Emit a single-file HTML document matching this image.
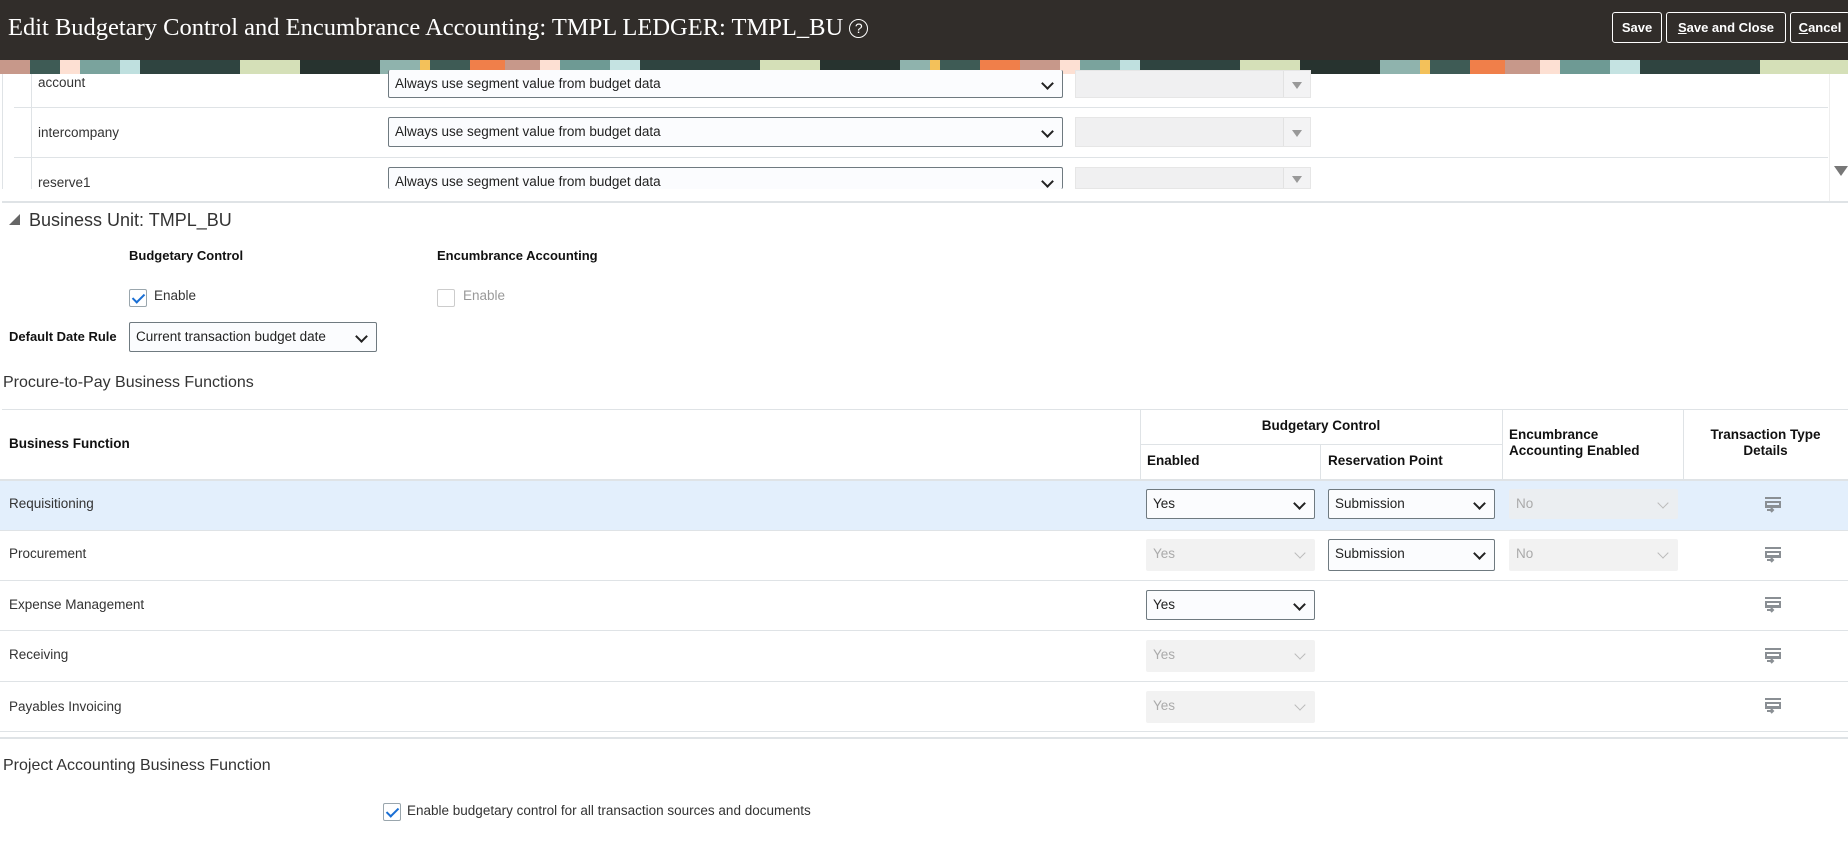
<!DOCTYPE html>
<html><head><meta charset="utf-8"><style>
*{box-sizing:border-box;margin:0;padding:0}
body{width:1848px;height:853px;overflow:hidden;background:#fff;font-family:"Liberation Sans",sans-serif;font-size:13.5px;color:#333;position:relative}
.a{position:absolute}
.hdr{left:0;top:0;width:1848px;height:60px;background:#312d2a}
.ttl{left:8px;top:14px;font-family:"Liberation Serif",serif;font-size:24.5px;color:#fff;white-space:nowrap}
.btn{top:12px;height:31px;border:1px solid #fff;border-radius:3px;color:#fff;font-weight:bold;font-size:13px;line-height:29px;text-align:center}
.ban{left:0;top:60px;width:1848px;height:14px;background:linear-gradient(90deg,#c7988a 0,#c7988a 30px,#3e5b55 30px,#3e5b55 60px,#fde0d3 60px,#fde0d3 80px,#7aa39d 80px,#7aa39d 120px,#bfe0df 120px,#bfe0df 140px,#2f4440 140px,#2f4440 240px,#d5e0b8 240px,#d5e0b8 300px,#27332f 300px,#27332f 380px,#8fb3ad 380px,#8fb3ad 420px,#f3c15a 420px,#f3c15a 430px,#3e5b55 430px,#3e5b55 470px,#f07f4a 470px,#f07f4a 505px,#c7988a 505px,#c7988a 540px,#fde0d3 540px,#fde0d3 560px,#6e9a94 560px,#6e9a94 610px,#c5e3e2 610px,#c5e3e2 640px,#2f4440 640px,#2f4440 760px,#d5e0b8 760px,#d5e0b8 820px,#27332f 820px,#27332f 900px,#8fb3ad 900px,#8fb3ad 930px,#f3c15a 930px,#f3c15a 940px,#3e5b55 940px,#3e5b55 980px,#f07f4a 980px,#f07f4a 1020px,#c7988a 1020px,#c7988a 1060px,#fde0d3 1060px,#fde0d3 1080px,#7aa39d 1080px,#7aa39d 1120px,#bfe0df 1120px,#bfe0df 1140px,#2f4440 1140px,#2f4440 1240px,#d5e0b8 1240px,#d5e0b8 1300px,#27332f 1300px,#27332f 1380px,#8fb3ad 1380px,#8fb3ad 1420px,#f3c15a 1420px,#f3c15a 1430px,#3e5b55 1430px,#3e5b55 1470px,#f07f4a 1470px,#f07f4a 1505px,#c7988a 1505px,#c7988a 1540px,#fde0d3 1540px,#fde0d3 1560px,#6e9a94 1560px,#6e9a94 1610px,#c5e3e2 1610px,#c5e3e2 1640px,#2f4440 1640px,#2f4440 1760px,#d5e0b8 1760px,#d5e0b8 1848px)}
.sel{border:1px solid #6f7a80;border-radius:2px;background:#fbfcfe;height:30px;line-height:28px;padding-left:6px;font-size:13.5px;color:#222;white-space:nowrap}
.sel::after{content:"";position:absolute;right:10px;top:9px;width:7px;height:7px;border-right:2px solid #222;border-bottom:2px solid #222;transform:rotate(45deg)}
.dis{border-color:#f2f2f2;background:#f2f2f2;color:#aaa}
.dis::after{border-color:#bbb;border-width:1px}
.gbox{background:#f0f0f1;border:1px solid #e6e6e6}
.gbox::after{content:"";position:absolute;right:0;top:0;width:26px;height:100%;border-left:1px solid #e2e2e2;background:#f3f3f4}
.gbox::before{content:"";position:absolute;right:8px;top:50%;margin-top:-2px;z-index:1;border-left:5px solid transparent;border-right:5px solid transparent;border-top:7px solid #999}
.hl{background:#e3effc}
.hline{height:1px;background:#dfe3e6}
.vline{width:1px;background:#dfe3e6}
.th{font-weight:bold;color:#111;font-size:13.5px}
.cb{width:18px;height:18px;border:1px solid #9aa6ad;border-radius:2px;background:#fff}
.chk::after{content:"";position:absolute;left:5px;top:1px;width:5px;height:10px;border-right:2.5px solid #1a6fd4;border-bottom:2.5px solid #1a6fd4;transform:rotate(45deg)}
</style></head><body>
<div class="a hdr"></div>
<div class="a ttl">Edit Budgetary Control and Encumbrance Accounting: TMPL LEDGER: TMPL_BU <span style="display:inline-block;width:19px;height:19px;border:1.5px solid #fff;border-radius:50%;font-family:'Liberation Sans';font-size:14px;text-align:center;line-height:17px;vertical-align:2px">?</span></div>
<div class="a btn" style="left:1612px;width:50px">Save</div>
<div class="a btn" style="left:1666px;width:120px"><u>S</u>ave and Close</div>
<div class="a btn" style="left:1790px;width:60px"><u>C</u>ancel</div>
<div class="a ban"></div>

<div class="a vline" style="left:2px;top:74px;height:128px"></div>
<div class="a vline" style="left:31px;top:74px;height:128px"></div>
<div class="a" style="left:38px;top:75px">account</div>
<div class="a sel" style="left:388px;top:70px;width:675px;height:28px;border-top:none">Always use segment value from budget data</div>
<div class="a gbox" style="left:1075px;top:70px;width:236px;height:28px"></div>
<div class="a hline" style="left:14px;top:107px;width:1814px"></div>
<div class="a" style="left:38px;top:125px">intercompany</div>
<div class="a sel" style="left:388px;top:117px;width:675px">Always use segment value from budget data</div>
<div class="a gbox" style="left:1075px;top:117px;width:236px;height:30px"></div>
<div class="a hline" style="left:14px;top:157px;width:1814px"></div>
<div class="a" style="left:38px;top:175px">reserve1</div>
<div class="a sel" style="left:388px;top:167px;width:675px;height:22px;border-bottom:none">Always use segment value from budget data</div>
<div class="a gbox" style="left:1075px;top:167px;width:236px;height:22px"></div>
<div class="a" style="left:0;top:189px;width:1830px;height:12px;background:#fff"></div>
<div class="a" style="left:1834px;top:166px;width:0;height:0;border-left:7px solid transparent;border-right:7px solid transparent;border-top:10px solid #777"></div>
<div class="a" style="left:1829px;top:74px;width:1px;height:128px;background:#eee"></div>
<div class="a" style="left:2px;top:201px;width:1846px;height:2px;background:#dfe3e6"></div>

<div class="a" style="left:9px;top:214px;width:0;height:0;border-left:11px solid transparent;border-bottom:11px solid #666"></div>
<div class="a" style="left:29px;top:210px;font-size:18px;color:#333">Business Unit: TMPL_BU</div>
<div class="a th" style="left:129px;top:248px;font-size:13px">Budgetary Control</div>
<div class="a th" style="left:437px;top:248px;font-size:13px">Encumbrance Accounting</div>
<div class="a cb chk" style="left:129px;top:289px"></div>
<div class="a" style="left:154px;top:288px">Enable</div>
<div class="a cb" style="left:437px;top:289px;border-color:#ccc"></div>
<div class="a" style="left:463px;top:288px;color:#999">Enable</div>
<div class="a th" style="left:9px;top:329px;font-size:13px">Default Date Rule</div>
<div class="a sel" style="left:129px;top:322px;width:248px">Current transaction budget date</div>
<div class="a" style="left:3px;top:374px;font-size:16px">Procure-to-Pay Business Functions</div>

<div class="a hline" style="left:2px;top:409px;width:1846px"></div>
<div class="a vline" style="left:1140px;top:409px;height:70px"></div>
<div class="a vline" style="left:1320px;top:444px;height:35px"></div>
<div class="a vline" style="left:1502px;top:409px;height:70px"></div>
<div class="a vline" style="left:1683px;top:409px;height:70px"></div>
<div class="a hline" style="left:1140px;top:444px;width:362px"></div>
<div class="a th" style="left:9px;top:436px">Business Function</div>
<div class="a th" style="left:1140px;top:418px;width:362px;text-align:center">Budgetary Control</div>
<div class="a th" style="left:1147px;top:453px">Enabled</div>
<div class="a th" style="left:1328px;top:453px">Reservation Point</div>
<div class="a th" style="left:1509px;top:427px;line-height:16px">Encumbrance<br>Accounting Enabled</div>
<div class="a th" style="left:1683px;top:427px;width:165px;text-align:center;line-height:16px">Transaction Type<br>Details</div>
<div class="a" style="left:0;top:479px;width:1848px;height:2px;background:#dfe3e6"></div>

<div class="a hl" style="left:0;top:481px;width:1848px;height:49px"></div>
<div class="a" style="left:9px;top:496px">Requisitioning</div>
<div class="a sel" style="left:1146px;top:489px;width:169px">Yes</div>
<div class="a sel" style="left:1328px;top:489px;width:167px">Submission</div>
<div class="a sel dis" style="left:1509px;top:489px;width:169px;background:#ebeef1;border-color:#ebeef1">No</div>
<div class="a hline" style="left:0;top:530px;width:1848px"></div>

<div class="a" style="left:9px;top:546px">Procurement</div>
<div class="a sel dis" style="left:1146px;top:539px;width:169px;height:32px">Yes</div>
<div class="a sel" style="left:1328px;top:539px;width:167px;height:32px">Submission</div>
<div class="a sel dis" style="left:1509px;top:539px;width:169px;height:32px">No</div>
<div class="a hline" style="left:0;top:580px;width:1848px"></div>

<div class="a" style="left:9px;top:597px">Expense Management</div>
<div class="a sel" style="left:1146px;top:590px;width:169px">Yes</div>
<div class="a hline" style="left:0;top:630px;width:1848px"></div>

<div class="a" style="left:9px;top:647px">Receiving</div>
<div class="a sel dis" style="left:1146px;top:640px;width:169px;height:32px">Yes</div>
<div class="a hline" style="left:0;top:681px;width:1848px"></div>

<div class="a" style="left:9px;top:699px">Payables Invoicing</div>
<div class="a sel dis" style="left:1146px;top:691px;width:169px;height:32px">Yes</div>
<div class="a hline" style="left:0;top:731px;width:1848px"></div>
<div class="a" style="left:0;top:737px;width:1848px;height:2px;background:#dfe3e6"></div>

<svg class="a" style="left:1765px;top:497px" width="16" height="16" viewBox="0 0 16 16"><rect x="0" y="0" width="16" height="2" fill="#8a8f94"/><rect x="0" y="4" width="16" height="7" fill="#8a8f94"/><rect x="2" y="6" width="12" height="2" fill="#e3effc"/><path d="M2 13h6M6 11l2 2-2 2" stroke="#8a8f94" stroke-width="2" fill="none"/></svg>
<svg class="a" style="left:1765px;top:547px" width="16" height="16" viewBox="0 0 16 16"><rect x="0" y="0" width="16" height="2" fill="#8a8f94"/><rect x="0" y="4" width="16" height="7" fill="#8a8f94"/><rect x="2" y="6" width="12" height="2" fill="#fff"/><path d="M2 13h6M6 11l2 2-2 2" stroke="#8a8f94" stroke-width="2" fill="none"/></svg>
<svg class="a" style="left:1765px;top:597px" width="16" height="16" viewBox="0 0 16 16"><rect x="0" y="0" width="16" height="2" fill="#8a8f94"/><rect x="0" y="4" width="16" height="7" fill="#8a8f94"/><rect x="2" y="6" width="12" height="2" fill="#fff"/><path d="M2 13h6M6 11l2 2-2 2" stroke="#8a8f94" stroke-width="2" fill="none"/></svg>
<svg class="a" style="left:1765px;top:648px" width="16" height="16" viewBox="0 0 16 16"><rect x="0" y="0" width="16" height="2" fill="#8a8f94"/><rect x="0" y="4" width="16" height="7" fill="#8a8f94"/><rect x="2" y="6" width="12" height="2" fill="#fff"/><path d="M2 13h6M6 11l2 2-2 2" stroke="#8a8f94" stroke-width="2" fill="none"/></svg>
<svg class="a" style="left:1765px;top:698px" width="16" height="16" viewBox="0 0 16 16"><rect x="0" y="0" width="16" height="2" fill="#8a8f94"/><rect x="0" y="4" width="16" height="7" fill="#8a8f94"/><rect x="2" y="6" width="12" height="2" fill="#fff"/><path d="M2 13h6M6 11l2 2-2 2" stroke="#8a8f94" stroke-width="2" fill="none"/></svg>

<div class="a" style="left:3px;top:757px;font-size:16px">Project Accounting Business Function</div>
<div class="a cb chk" style="left:383px;top:803px"></div>
<div class="a" style="left:407px;top:803px">Enable budgetary control for all transaction sources and documents</div>
</body></html>
